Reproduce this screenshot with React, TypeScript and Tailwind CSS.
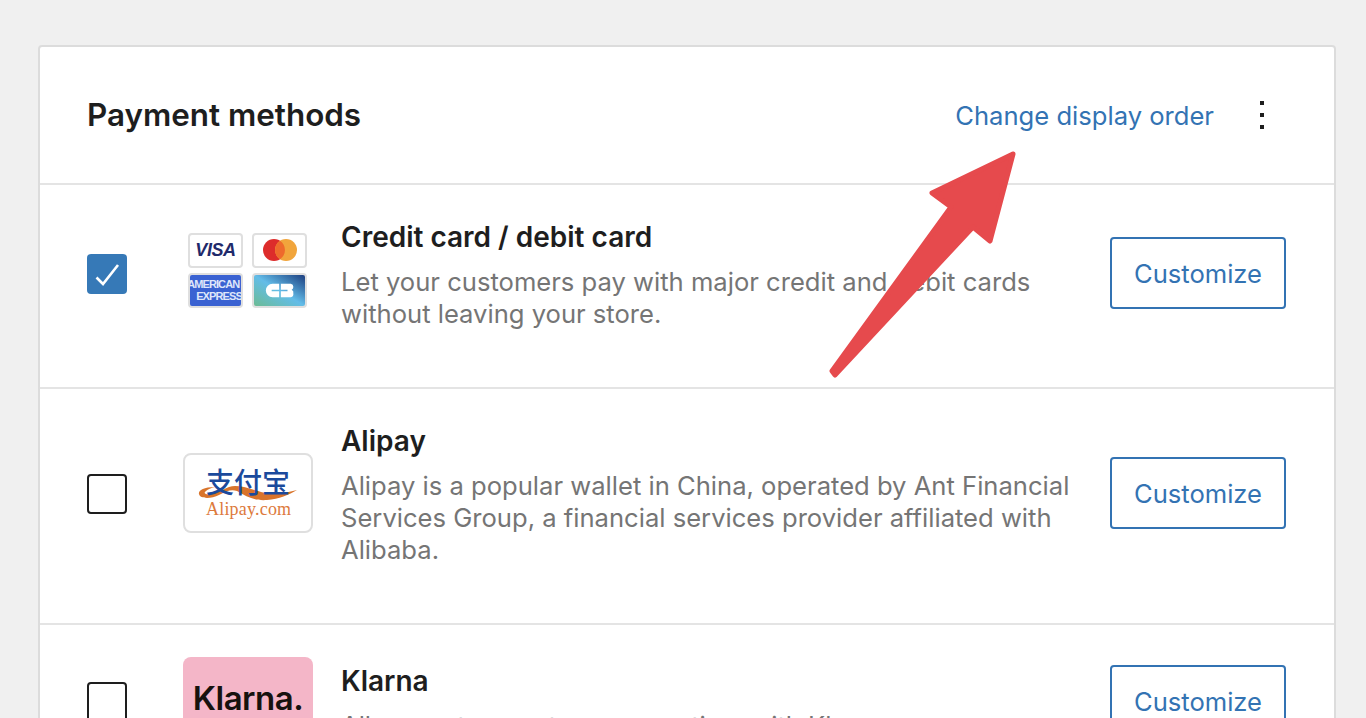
import React from "react";

function CardIcon({ children, className }: { children?: React.ReactNode; className?: string }) {
  return (
    <div className={`w-[55px] h-[35px] rounded-[4px] border-2 border-[#dfdfdf] overflow-hidden flex items-center justify-center ${className}`}>
      {children}
    </div>
  );
}

function CardsLogo() {
  return (
    <div className="w-[130px] grid grid-cols-[55px_55px] gap-x-[9px] gap-y-[5px] pl-[5px] pb-[6px]">
      <CardIcon className="bg-white">
        <span className="text-[18px] leading-none font-bold italic text-[#1f2a6b] tracking-[-0.4px] font-['Liberation_Sans',sans-serif]">VISA</span>
      </CardIcon>
      <CardIcon className="bg-white">
        <svg width="38" height="24" viewBox="0 0 38 24">
          <circle cx="13" cy="12" r="11" fill="#dd2c2b" />
          <circle cx="25" cy="12" r="11" fill="#f1a53c" />
          <path d="M19 2.800a11 11 0 0 1 0 18.400a11 11 0 0 1 0-18.400z" fill="#ee6a2c" />
        </svg>
      </CardIcon>
      <CardIcon className="bg-[#3a62d2]">
        <div className="text-[11px] leading-[12px] font-bold tracking-[-0.9px] text-[#dfe6fa] font-['Liberation_Sans',sans-serif] whitespace-nowrap">
          <div className="-ml-[2px]">AMERICAN</div>
          <div className="ml-[7px]">EXPRESS</div>
        </div>
      </CardIcon>
      <CardIcon className="bg-linear-to-bl from-[#1f3f80] via-[#63bce8] to-[#6dbb93]">
        <svg width="36" height="15" viewBox="0 0 36 18">
          <path d="M17 1H9a8 8 0 0 0 0 16h8v-7H8V8h9z" fill="#fff" />
          <path d="M19 1h12a3.500 3.500 0 0 1 3 3.500a3.500 3.500 0 0 1-2 3.500a4 4 0 0 1 2 4.500a4 4 0 0 1-3 4.500H19v-7h8V8h-8z" fill="#fff" />
        </svg>
      </CardIcon>
    </div>
  );
}

function AlipayLogo() {
  return (
    <div className="w-[130px] h-[80px] rounded-[8px] border-2 border-[#dfdfdf] bg-white relative overflow-hidden">
      <svg className="absolute left-[-2px] top-[-2px]" width="130" height="80" viewBox="0 0 130 80">
        <path
          d="M32 34C20 34 15 38 16 41C17 46 28 46 36 42C44 38 48 36 54 38C64 44 72 48 84 47C96 46 106 42 114 37C104 40 90 42 78 39C68 36 60 33 52 33C44 33 36 40 28 41C22 42 20 40 23 38C25 36 28 35 32 34Z"
          fill="#d9742b"
        />
      </svg>
      <span className="absolute left-[21px] top-[9px] text-[28px] leading-[34px] font-medium text-[#1b4a9c] font-['Noto_Sans_CJK_SC',sans-serif]">支付宝</span>
      <span className="absolute left-[21px] top-[42px] text-[18px] leading-[24px] tracking-[0.2px] text-[#dd7a3c] font-['Liberation_Serif',serif]">Alipay.com</span>
    </div>
  );
}

function KlarnaLogo() {
  return (
    <div className="w-[130px] h-[88px] rounded-[8px] bg-[#f4b6c8] flex items-center justify-center pb-[6px]">
      <span className="text-[33px] leading-none font-semibold tracking-[-0.5px] text-[#17120f] font-['Inter',sans-serif]">Klarna.</span>
    </div>
  );
}

function Row({
  checked,
  logo,
  title,
  description,
  className,
}: {
  checked?: boolean;
  logo: React.ReactNode;
  title: string;
  description: string;
  className?: string;
}) {
  return (
    <div className={`flex items-center pl-[47px] pr-[48px] pb-[57px] ${className}`}>
      <div className="w-[96px] shrink-0 mb-[3px]">
        {checked ? (
          <div className="w-[40px] h-[40px] rounded-[4px] bg-[#3679b7] flex items-center justify-center">
            <svg width="40" height="40" viewBox="0 0 40 40" fill="none">
              <path d="M9.500 23.500L16 30L31 11" stroke="#fff" strokeWidth="2.600" />
            </svg>
          </div>
        ) : (
          <div className="w-[40px] h-[40px] rounded-[4px] border-2 border-[#1e1e1e] bg-white" />
        )}
      </div>
      <div className="w-[130px] shrink-0 mb-[5px] flex justify-center">{logo}</div>
      <div className="ml-[28px] w-[745px] shrink-0">
        <div className="text-[28px] leading-[32px] font-semibold text-[#1e1e1e]">{title}</div>
        <p className="mt-[13px] text-[25.6px] leading-[32px] text-[#757575]">{description}</p>
      </div>
      <button className="ml-auto mb-[5px] w-[176px] h-[72px] shrink-0 rounded-[4px] border-2 border-[#3373b3] text-[25.6px] text-[#3373b3] bg-white pt-[3px]">
        Customize
      </button>
    </div>
  );
}

export default function App() {
  return (
    <div className="relative h-[718px] overflow-hidden bg-[#f0f0f0] pt-[45px] pl-[38px] pr-[30px] font-['Inter',sans-serif]">
      <div className="rounded-[4px] border-2 border-[#dcdcdc] bg-white divide-y-2 divide-[#e4e4e4]">
        <div className="h-[138px] flex items-center pl-[47px] pr-[70px]">
          <h2 className="text-[31.4px] font-semibold text-[#1e1e1e] pt-[2px]">Payment methods</h2>
          <a className="ml-auto text-[25.6px] text-[#3373b3] pt-[2px]">Change display order</a>
          <div className="ml-[46px] flex flex-col gap-[8px]">
            <span className="w-[4px] h-[4px] bg-[#1e1e1e]" />
            <span className="w-[4px] h-[4px] bg-[#1e1e1e]" />
            <span className="w-[4px] h-[4px] bg-[#1e1e1e]" />
          </div>
        </div>
        <Row
          checked
          className="pt-[36px]"
          logo={<CardsLogo />}
          title="Credit card / debit card"
          description="Let your customers pay with major credit and debit cards without leaving your store."
        />
        <Row
          className="pt-[36px]"
          logo={<AlipayLogo />}
          title="Alipay"
          description="Alipay is a popular wallet in China, operated by Ant Financial Services Group, a financial services provider affiliated with Alibaba."
        />
        <Row
          className="pt-[32px]"
          logo={<KlarnaLogo />}
          title="Klarna"
          description="Allow customers to pay over time with Klarna."
        />
      </div>
      {/* red annotation arrow */}
      <svg className="absolute left-0 top-0 pointer-events-none" width="1366" height="718" viewBox="0 0 1366 718">
        <path
          d="M1013 154L932 193L951 207L832 371L835 375L973 227L990 241Z"
          fill="#e64a4d"
          stroke="#e64a4d"
          strokeWidth="5"
          strokeLinejoin="round"
        />
      </svg>
    </div>
  );
}
